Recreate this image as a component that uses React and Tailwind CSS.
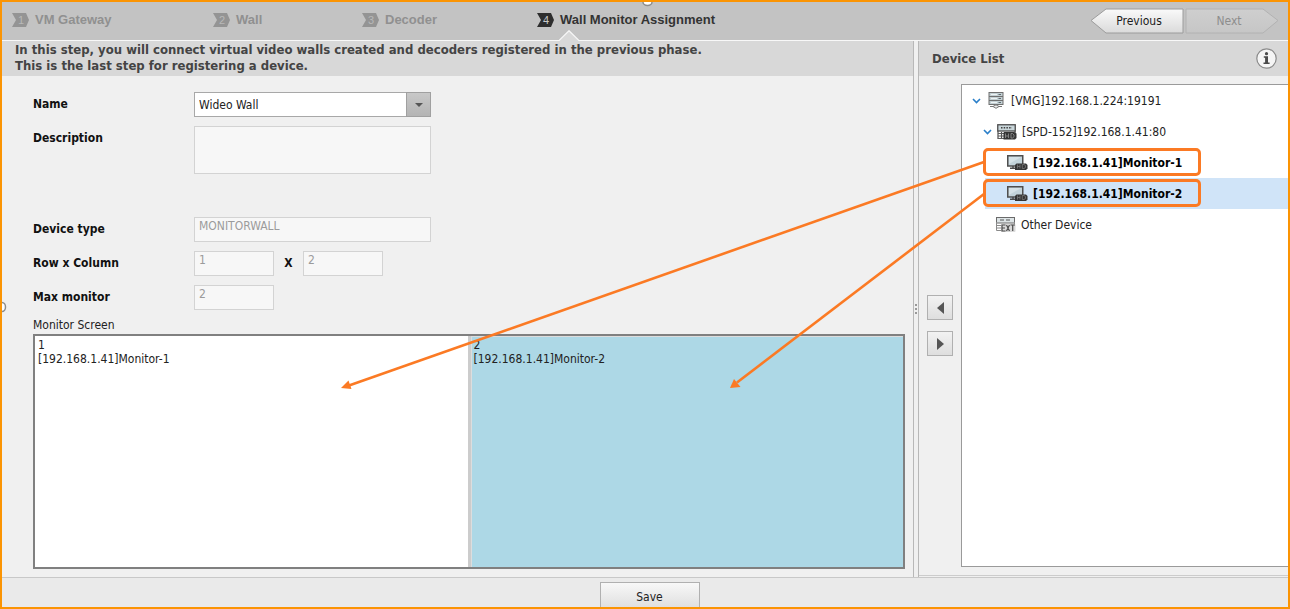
import React, { useState } from 'react';

const STEPS = [
  { id: 1, label: 'VM Gateway', width: 'w-[201px]' },
  { id: 2, label: 'Wall', width: 'w-[149px]' },
  { id: 3, label: 'Decoder', width: 'w-[175px]' },
  { id: 4, label: 'Wall Monitor Assignment', width: '' },
];

const ACTIVE_STEP = 4;

function StepBadge({ number, active }) {
  return (
    <svg width="17" height="14" viewBox="0 0 17 14" className="shrink-0">
      <path d="M0 0H14L17 7L14 14H0L4 7Z" fill={active ? '#2e2e2e' : '#949494'} />
      <text
        x="9" y="11" textAnchor="middle" fontSize="11" fontWeight="400"
        fontFamily="Liberation Sans, sans-serif" fill={active ? '#c8c8c8' : '#b8b8b8'}
      >{number}</text>
    </svg>
  );
}

function Steps() {
  return (
    <ol className="flex flex-1 items-center pl-[10px] font-['Liberation_Sans',sans-serif] text-[13px] font-bold">
      {STEPS.map(s => {
        const active = s.id === ACTIVE_STEP;
        return (
          <li
            key={s.id}
            aria-current={active ? 'step' : undefined}
            className={`${s.width} relative flex h-[38px] items-center gap-[6px] whitespace-nowrap pb-[2px] ${active ? 'text-[#333333]' : 'text-[#909090]'}`}
          >
            <StepBadge number={s.id} active={active} />
            {s.label}
            {active && (
              <svg width="20" height="11" viewBox="0 0 20 11" className="absolute -bottom-px left-[22px]">
                <path d="M0 11L10 1L20 11Z" fill="#d8d8d8" />
                <path d="M0 10.5L10 0.7L20 10.5" fill="none" stroke="#f8f8f8" strokeWidth="1.2" />
              </svg>
            )}
          </li>
        );
      })}
    </ol>
  );
}

function NavButton({ direction, disabled, children }) {
  const back = direction === 'back';
  return (
    <button type="button" disabled={disabled} className="relative h-[26px] w-[94px] text-xs">
      <svg width="94" height="26" viewBox="0 0 94 26" className="absolute inset-0">
        <defs>
          <linearGradient id={`nav-${direction}`} x1="0" y1="0" x2="0" y2="1">
            <stop offset="0" stopColor={disabled ? '#cfcfcf' : '#fafafa'} />
            <stop offset="1" stopColor={disabled ? '#c6c6c6' : '#dadada'} />
          </linearGradient>
        </defs>
        <path
          d={back ? 'M1 12.5L16 1H93V25H16Z' : 'M1 1H78L93 12.5L78 25H1Z'}
          fill={`url(#nav-${direction})`}
          stroke={disabled ? '#b2b2b2' : '#9c9c9c'}
        />
      </svg>
      <span className={back ? 'relative pl-1 text-[#1c1c1c]' : 'relative pr-1.5 text-[#8d8d8d]'}>{children}</span>
    </button>
  );
}

/* ── Tree icons ─────────────────────────────────────────────────────────── */

function GatewayIcon() {
  return (
    <svg width="16" height="17" viewBox="0 0 16 17">
      <rect x="1" y="0.5" width="14" height="12" fill="#c3d0d4" stroke="#6f6f6f" />
      <path d="M1 4.5H15M1 8.5H15" stroke="#6f6f6f" />
      <path d="M3 2.5H9M3 6.5H9M3 10.5H9" stroke="#eef3f4" />
      <path d="M10.5 2.5H13M10.5 6.5H13M10.5 10.5H13" stroke="#5f6b70" />
      <path d="M8 12V14M2 14.5H5M11 14.5H14" stroke="#777" />
      <path d="M5 14.5L8 12.8L11 14.5L8 16.3Z" fill="#eee" stroke="#777" />
    </svg>
  );
}

function DecoderIcon() {
  return (
    <svg width="20" height="16" viewBox="0 0 20 16">
      <rect x="0.75" y="0.75" width="17.5" height="6.25" fill="#c9d6da" stroke="#4d4d4d" strokeWidth="1.3" />
      <path d="M4 3.7H15" stroke="#3f3f3f" strokeWidth="1.5" strokeDasharray="1.5 1.2" />
      <path d="M1 7V14.5M4.5 8V14.5M18 7V9" stroke="#4d4d4d" strokeWidth="1.2" />
      <path d="M1 9.5H7M1 12H7M0.500 14.500H7" stroke="#5c5c5c" />
      <path d="M7 8H17L19.500 9.500V14L18 15.500H6.500V9Z" fill="#353535" />
      <path d="M8.500 9.500V14M8.500 12H11.500M11.500 9.500V14M14 9.500V14H15.500L17 12.800V11L15.500 9.500Z" fill="none" stroke="#8a8a8a" strokeWidth="0.9" />
    </svg>
  );
}

function MonitorIcon() {
  return (
    <svg width="21" height="16" viewBox="0 0 21 16">
      <rect x="0.75" y="0.75" width="15" height="10.250" fill="#c3d3da" stroke="#4f4f4f" strokeWidth="1.5" />
      <path d="M2 2H14L2 9Z" fill="#d6e2e7" />
      <path d="M6 11V13M3 13.300H9" stroke="#4a4a4a" strokeWidth="1.5" />
      <path d="M9.500 8.500H19L20.500 10V13.500L19 15H8V10Z" fill="#353535" />
      <path d="M10.500 9.500V13.500M10.500 11.500H13M13 9.500V13.500M15.300 9.500V13.500H17L18.500 12.500V10.500L17 9.500Z" fill="none" stroke="#7a7a7a" strokeWidth="0.8" />
    </svg>
  );
}

function OtherDeviceIcon() {
  return (
    <svg width="20" height="15" viewBox="0 0 20 15">
      <rect x="0.5" y="0.5" width="18" height="5.500" fill="#dde4e6" stroke="#6a6a6a" />
      <path d="M4 3H8M10 3H14" stroke="#555" strokeWidth="1.2" />
      <path d="M0.5 5V13.5H5M18.5 5V7M0.500 8.500H5M0.500 11H5" fill="none" stroke="#8a8a8a" />
      <rect x="5" y="7" width="14.500" height="8" rx="1" fill="#dadada" />
      <path d="M9.500 8H6V14H9.500M6 11H9M10.500 8L13.500 14M13.500 8L10.500 14M14.500 8H19M16.700 8V14" fill="none" stroke="#4c4c4c" strokeWidth="1.2" />
    </svg>
  );
}

function Chevron() {
  return (
    <svg width="9" height="6" viewBox="0 0 9 6">
      <path d="M1 1L4.5 4.5L8 1" fill="none" stroke="#2a7fc9" strokeWidth="1.6" />
    </svg>
  );
}

const DEVICES = [
  { id: 'vmg', label: '[VMG]192.168.1.224:19191', icon: GatewayIcon, open: true, indent: 'pl-[10px]', gap: 'gap-[7px]' },
  { id: 'spd', label: '[SPD-152]192.168.1.41:80', icon: DecoderIcon, open: true, indent: 'pl-[21px]', gap: 'gap-[5px]' },
  { id: 'mon1', label: '[192.168.1.41]Monitor-1', icon: MonitorIcon, monitor: true, indent: 'pl-[45px]', gap: 'gap-[5px]' },
  { id: 'mon2', label: '[192.168.1.41]Monitor-2', icon: MonitorIcon, monitor: true, indent: 'pl-[45px]', gap: 'gap-[5px]' },
  { id: 'other', label: 'Other Device', icon: OtherDeviceIcon, indent: 'pl-[34px]', gap: 'gap-[5px]' },
];

function DeviceTree({ selected, onSelect }) {
  return (
    <ul role="tree" aria-label="Device List" className="flex-1 border border-r-0 border-[#9a9a9a] bg-white text-xs text-[#222222]">
      {DEVICES.map(d => {
        const Icon = d.icon;
        return (
          <li
            key={d.id}
            role="treeitem"
            aria-selected={selected === d.id}
            onClick={() => onSelect(d.id)}
            className="relative h-[31px] whitespace-nowrap"
          >
            {selected === d.id && <span className="absolute inset-y-0 left-[23px] right-0 bg-[#d0e4f8]" />}
            <span className={`relative flex h-full items-center ${d.gap} ${d.indent}`}>
              {d.open && <Chevron />}
              <Icon />
              <span className={d.monitor ? 'font-bold text-black' : ''}>{d.label}</span>
            </span>
            {d.monitor && (
              <span className="absolute left-[21px] top-px h-[28px] w-[218px] rounded-[5px] border-3 border-[#fb7a24]" />
            )}
          </li>
        );
      })}
    </ul>
  );
}

const readOnlyBox = 'border border-[#d3d3d3] bg-[#f7f7f7] px-1 text-[#9b9b9b] outline-none';

function FormRow({ label, htmlFor, className = '', children }) {
  return (
    <div className={`flex items-start ${className}`}>
      <label htmlFor={htmlFor} className="w-[161px] shrink-0 pt-1 font-bold leading-4 text-[#111111]">{label}</label>
      {children}
    </div>
  );
}

function MonitorForm() {
  return (
    <div className="flex flex-col pt-4 text-xs">
      <FormRow label="Name" htmlFor="wall-name">
        <div className="relative">
          <select
            id="wall-name"
            className="block h-[25px] w-[237px] appearance-none border border-[#a8a8a8] bg-white px-1 text-[#222222] outline-none"
          >
            <option>Wideo Wall</option>
          </select>
          <span className="pointer-events-none absolute inset-y-0 right-0 flex w-[25px] items-center justify-center border border-[#a0a0a0] bg-linear-to-b from-[#c8c8c8] to-[#b4b4b4]">
            <svg width="8" height="4" viewBox="0 0 8 4"><path d="M0 0H8L4 4Z" fill="#555" /></svg>
          </span>
        </div>
      </FormRow>
      <FormRow label="Description" htmlFor="wall-desc" className="mt-[9px]">
        <textarea id="wall-desc" readOnly className={`${readOnlyBox} block h-[48px] w-[237px] resize-none`} />
      </FormRow>
      <FormRow label="Device type" htmlFor="wall-type" className="mt-[43px]">
        <input id="wall-type" readOnly defaultValue="MONITORWALL" className={`${readOnlyBox} h-[25px] w-[237px] pb-2`} />
      </FormRow>
      <FormRow label="Row x Column" htmlFor="wall-rows" className="mt-[9px]">
        <input id="wall-rows" readOnly defaultValue="1" className={`${readOnlyBox} h-[25px] w-[80px] pb-2`} />
        <span className="w-[29px] pt-1 text-center font-bold leading-4 text-[#111111]">X</span>
        <input aria-label="Columns" readOnly defaultValue="2" className={`${readOnlyBox} h-[25px] w-[80px] pb-2`} />
      </FormRow>
      <FormRow label="Max monitor" htmlFor="wall-max" className="mt-[9px]">
        <input id="wall-max" readOnly defaultValue="2" className={`${readOnlyBox} h-[25px] w-[80px] pb-2`} />
      </FormRow>
    </div>
  );
}

function ScreenCell({ index, monitor, className }) {
  return (
    <div className={`flex-1 text-xs leading-[14px] text-[#222222] ${className}`}>
      <p>{index}</p>
      <p>{monitor}</p>
    </div>
  );
}

function MoveButton({ label, path }) {
  return (
    <button
      type="button"
      aria-label={label}
      className="flex h-[25px] w-[26px] items-center justify-center border border-[#b0b0b0] bg-linear-to-b from-[#f2f2f2] to-[#dedede]"
    >
      <svg width="7" height="12" viewBox="0 0 7 12"><path d={path} fill="#555" /></svg>
    </button>
  );
}

// Callout arrows from the listed monitors to the screens they are assigned to.
function AssignmentArrows() {
  return (
    <svg width="1290" height="609" viewBox="0 0 1290 609" className="pointer-events-none absolute -left-[2px] -top-[2px]">
      <g stroke="#fb7a24" strokeWidth="2.6" fill="none">
        <path d="M984 162L349 385.5" />
        <path d="M984 194L737 382.5" />
      </g>
      <path d="M341 388L348.5 380.5L351.5 389Z" fill="#fb7a24" />
      <path d="M730 388L734 379L740.5 387Z" fill="#fb7a24" />
      <g fill="#fff" stroke="#8c8c8c" strokeWidth="1.5">
        <path d="M643 2A4.5 3.5 0 0 0 652 2" />
        <path d="M2 302.5A3.5 4.5 0 0 1 2 311.5" />
      </g>
    </svg>
  );
}

export default function App() {
  const [selected, setSelected] = useState('mon2');

  return (
    <div className="relative flex h-screen flex-col overflow-hidden border-2 border-[#fb9403] bg-[#f0f0f0] font-['DejaVu_Sans_Condensed','Noto_Sans',sans-serif]">
      <header className="flex shrink-0 items-center border-b border-[#f8f8f8] bg-[#c3c3c3] pr-[9px]">
        <Steps />
        <nav className="flex gap-px">
          <NavButton direction="back">Previous</NavButton>
          <NavButton direction="next" disabled>Next</NavButton>
        </nav>
      </header>

      <div className="flex min-h-0 flex-1">
        <main className="flex min-w-0 flex-1 flex-col">
          <p className="bg-[#d8d8d8] px-[13px] pb-[2px] pt-px text-[13px] font-bold leading-4 text-[#444444]">
            In this step, you will connect virtual video walls created and decoders registered in the previous phase.
            <br />
            This is the last step for registering a device.
          </p>
          <div className="flex flex-1 flex-col pb-2 pl-[31px] pr-2">
            <MonitorForm />
            <h2 className="mt-[7px] text-xs leading-4 text-[#222222]">Monitor Screen</h2>
            <div className="mt-px flex flex-1 border-2 border-[#808080] bg-white">
              <ScreenCell index="1" monitor="[192.168.1.41]Monitor-1" className="bg-white pl-[3px] pt-[2px]" />
              <div className="w-[3px] bg-[#cccccc]" />
              <ScreenCell index="2" monitor="[192.168.1.41]Monitor-2" className="border-l border-t border-[#dddddd] bg-[#add8e6] pl-[2px] pt-px" />
            </div>
          </div>
        </main>

        <div className="flex w-[6px] flex-col items-center justify-center gap-[2px] border-x border-[#b8b8b8] bg-[#f0f0f0]">
          <span className="size-[2px] bg-[#999999]" />
          <span className="size-[2px] bg-[#999999]" />
          <span className="size-[2px] bg-[#999999]" />
        </div>

        <aside className="mb-px flex w-[369px] flex-col border-b border-[#cccccc]">
          <div className="flex h-[35px] shrink-0 items-center justify-between bg-[#d8d8d8] pl-[13px] pr-[11px]">
            <h2 className="text-[13px] font-bold text-[#444444]">Device List</h2>
            <button type="button" aria-label="Information">
              <svg width="21" height="21" viewBox="0 0 21 21">
                <circle cx="10.5" cy="10.5" r="9.7" fill="#f5f5f5" stroke="#8a8a8a" strokeWidth="1.2" />
                <circle cx="10.5" cy="5.7" r="1.6" fill="#4a4a4a" />
                <path d="M7.8 8.3H12V14.5H13.6V16H7.5V14.5H9.1V9.8H7.8Z" fill="#4a4a4a" />
              </svg>
            </button>
          </div>
          <div className="flex flex-1 gap-2 pb-2 pl-2 pt-2">
            <div className="flex flex-col justify-center gap-[11px]">
              <MoveButton label="Assign device" path="M7 0V12L0 6Z" />
              <MoveButton label="Remove device" path="M0 0V12L7 6Z" />
            </div>
            <DeviceTree selected={selected} onSelect={setSelected} />
          </div>
        </aside>
      </div>

      <footer className="flex h-[30px] shrink-0 justify-center border-t border-[#c8c8c8] bg-[#eaeaea] pl-[9px] pt-1">
        <button type="button" className="h-[30px] w-[100px] shrink-0 border border-[#b0b0b0] bg-linear-to-b from-[#f8f8f8] to-[#dcdcdc] text-xs text-[#222222]">
          Save
        </button>
      </footer>

      <AssignmentArrows />
    </div>
  );
}
